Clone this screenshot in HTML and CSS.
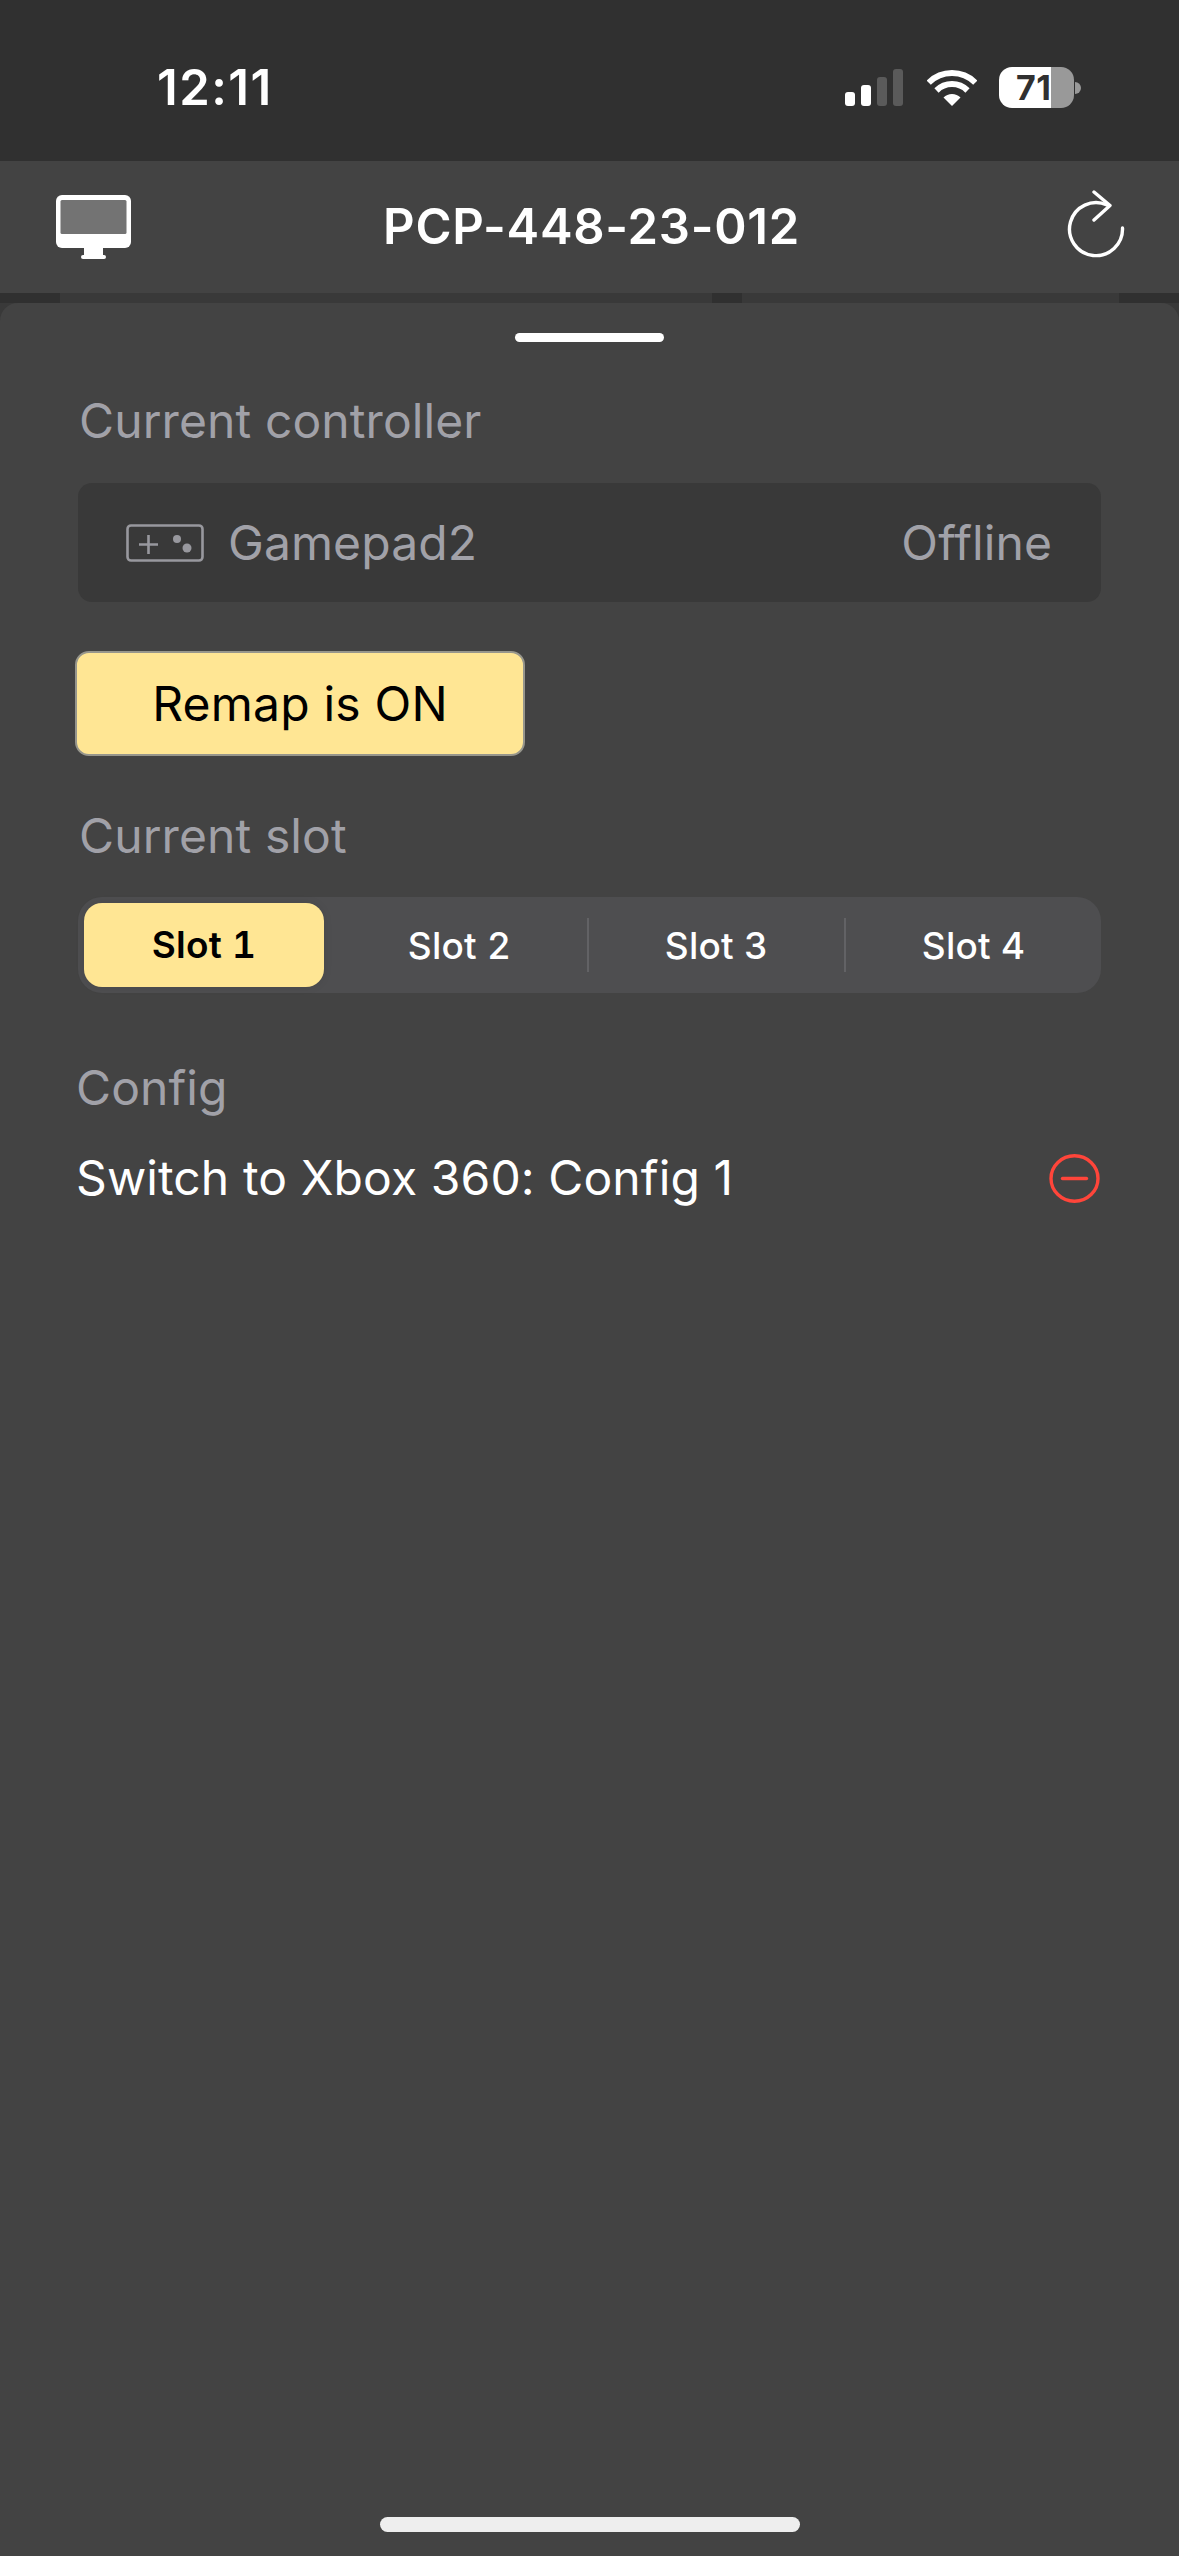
FILE: index.html
```html
<!DOCTYPE html>
<html lang="en">
<head>
<meta charset="utf-8">
<title>PCP-448-23-012</title>
<link rel="stylesheet" href="styles.css">
</head>
<body>
<div class="screen">
  <div class="status">
    <span class="time">12:11</span>
    <div class="status-icons">
      <div class="signal"><i class="bar b1"></i><i class="bar b2"></i><i class="bar b3 off"></i><i class="bar b4 off"></i></div>
      <svg class="wifi" viewBox="0 0 50 37" width="50" height="37">
        <path d="M1.7 13.7A33 33 0 0 1 48.3 13.7" fill="none" stroke="#fff" stroke-width="6"/>
        <path d="M9.5 21.5A22 22 0 0 1 40.5 21.5" fill="none" stroke="#fff" stroke-width="6"/>
        <path d="M25 37L16.5 28.5A12 12 0 0 1 33.5 28.5Z" fill="#fff"/>
      </svg>
      <div class="battery"><div class="battery-body"><span class="battery-text">71</span></div><i class="battery-nub"></i></div>
    </div>
  </div>
  <header class="header">
    <svg class="monitor" viewBox="0 0 75 64" width="75" height="64">
      <rect x="0" y="0" width="75" height="53" rx="6" fill="#fff"/>
      <rect x="4.500" y="5" width="66" height="34" rx="1.500" fill="#737373"/>
      <rect x="28" y="53" width="19" height="8" fill="#fff"/>
      <rect x="25" y="60" width="25" height="4" rx="2" fill="#fff"/>
    </svg>
    <h1 class="title">PCP-448-23-012</h1>
    <svg class="refresh" viewBox="0 0 60 74" width="60" height="74">
      <path d="M55.500 38A26.500 26.500 0 1 1 40 15" fill="none" stroke="#fff" stroke-width="3.400" stroke-linecap="round"/>
      <path d="M27 2L43 15.500L27 30" fill="none" stroke="#fff" stroke-width="3.400" stroke-linecap="round" stroke-linejoin="round"/>
    </svg>
  </header>
  <div class="strip"><i class="patch p1"></i><i class="patch p2"></i><i class="patch p3"></i></div>
  <main class="sheet">
    <div class="handle"></div>
    <div class="label">Current controller</div>
    <div class="controller">
      <svg class="gamepad" viewBox="0 0 78 38" width="78" height="38">
        <rect x="1.500" y="1.500" width="75" height="35" rx="3.500" fill="none" stroke="#98989e" stroke-width="2.600"/>
        <path d="M13 20.500H32M22.500 11V30" fill="none" stroke="#98989e" stroke-width="2.600"/>
        <circle cx="51" cy="15" r="4" fill="#98989e"/>
        <circle cx="61" cy="24" r="4.500" fill="#98989e"/>
      </svg>
      <span class="controller-name">Gamepad2</span>
      <span class="controller-state">Offline</span>
    </div>
    <button class="remap">Remap is ON</button>
    <div class="label label-slot">Current slot</div>
    <div class="slots">
      <div class="slot slot-active">Slot 1</div>
      <div class="slot">Slot 2</div>
      <i class="divider"></i>
      <div class="slot">Slot 3</div>
      <i class="divider"></i>
      <div class="slot">Slot 4</div>
    </div>
    <div class="label label-config">Config</div>
    <div class="config-row">
      <span class="config-name">Switch to Xbox 360: Config 1</span>
      <svg class="remove" viewBox="0 0 51 49" width="51" height="49">
        <ellipse cx="25.500" cy="24.500" rx="23.500" ry="22.700" fill="none" stroke="#ff453a" stroke-width="3.400"/>
        <path d="M13.500 24.500H37.500" fill="none" stroke="#ff453a" stroke-width="3.400" stroke-linecap="round"/>
      </svg>
    </div>
    <div class="home"></div>
  </main>
</div>
</body>
</html>
```

FILE: styles.css
```css
* { box-sizing: border-box; }
html, body { margin: 0; padding: 0; }
body { background: #393939; font-family: Inter, "Noto Sans", sans-serif; }
.screen { width: 1179px; height: 2556px; display: flex; flex-direction: column; overflow: hidden; background: #393939; }

.status { height: 161px; flex: none; background: #303030; display: flex; justify-content: space-between; align-items: flex-start; padding: 58px 98px 0 157px; }
.time { font-size: 49px; line-height: 60px; font-weight: 600; color: #fff; letter-spacing: 1.5px; }
.status-icons { display: flex; align-items: flex-start; margin-top: 9px; }
.signal { display: flex; align-items: flex-end; gap: 6px; height: 37px; margin-top: 2px; }
.bar { display: block; width: 10px; background: #fff; border-radius: 3px; }
.bar.off { background: #5a5a5a; }
.b1 { height: 14px; }
.b2 { height: 21px; }
.b3 { height: 29px; }
.b4 { height: 37px; }
.wifi { margin: 2px 0 0 24px; display: block; }
.battery { display: flex; align-items: center; margin-left: 22px; }
.battery-body { width: 75px; height: 41px; border-radius: 13px; background: linear-gradient(to right, #fff 0, #fff 52px, #999 52px, #999 100%); display: flex; align-items: center; justify-content: flex-start; padding-left: 17px; }
.battery-text { font-size: 34px; line-height: 41px; font-weight: 700; color: #303030; letter-spacing: 0.5px; }
.battery-nub { display: block; width: 6px; height: 12px; margin-left: 1px; background: #999; border-radius: 0 7px 7px 0; }

.header { height: 132px; flex: none; background: #434343; display: grid; grid-template-columns: 1fr auto 1fr; align-items: center; padding: 0 52px 0 56px; }
.monitor { display: block; }
.title { margin: 0; font-size: 49px; line-height: 60px; font-weight: 600; color: #fff; letter-spacing: 0.7px; }
.refresh { display: block; justify-self: end; }

.strip { height: 10px; flex: none; background: #393939; display: flex; }
.patch { display: block; height: 10px; background: #303030; }
.p1 { width: 60px; }
.p2 { width: 30px; margin-left: 652px; }
.p3 { width: 60px; margin-left: auto; }

.sheet { flex: 1; background: #434343; border-radius: 18px 18px 0 0; padding: 30px 78px 24px; display: flex; flex-direction: column; }
.handle { width: 149px; height: 9px; border-radius: 5px; background: #fff; align-self: center; flex: none; }
.label { font-size: 48px; line-height: 58px; color: #a1a1a8; margin: 50px 0 0 1px; letter-spacing: 0.1px; }

.controller { height: 119px; margin-top: 33px; background: #393939; border-radius: 14px; display: flex; align-items: center; padding: 0 49px 0 48px; font-size: 48px; color: #a1a1a8; letter-spacing: 0.1px; }
.gamepad { display: block; flex: none; }
.controller-name { margin-left: 24px; }
.controller-state { margin-left: auto; }

.remap { display: block; width: 450px; height: 105px; margin: 49px 0 0 -3px; padding: 0; background: #ffe694; border: 2px solid #97968c; border-radius: 14px; font: inherit; font-size: 48px; color: #000; letter-spacing: 0.2px; }

.label-slot { margin-top: 51px; }
.slots { height: 96px; margin-top: 32px; background: #4e4e50; border-radius: 24px; display: flex; align-items: center; padding-left: 6px; }
.slot { flex: 1; text-align: center; font-size: 37px; font-weight: 500; color: #fff; font-variant-numeric: tabular-nums; letter-spacing: 0.2px; }
.slot-active { flex: 0 0 240px; height: 84px; line-height: 84px; margin-right: 8px; background: #ffe694; border-radius: 18px; color: #000; font-weight: 600; box-shadow: 0 0 10px rgba(0,0,0,0.08); }
.divider { display: block; flex: none; width: 2px; height: 54px; background: #626265; }

.label-config { margin: 66px 0 0 -2px; }
.config-row { margin: 32px 0 0 -2px; display: flex; align-items: center; justify-content: space-between; font-size: 48px; line-height: 58px; color: #fff; padding-right: 1px; letter-spacing: 0.1px; }
.remove { display: block; }

.home { width: 420px; height: 15px; border-radius: 8px; background: #eee; align-self: center; margin-top: auto; flex: none; }
```
